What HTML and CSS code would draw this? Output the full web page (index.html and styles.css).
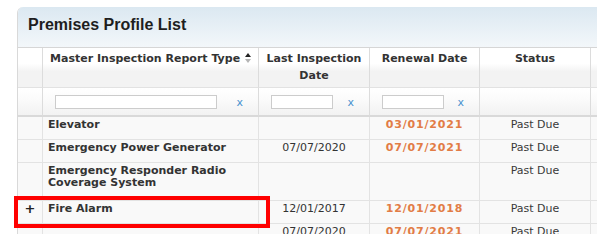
FILE: index.html
```html
<!DOCTYPE html>
<html>
<head>
<meta charset="utf-8">
<link rel="stylesheet" href="styles.css">
</head>
<body>
<div class="page">
  <div class="panel">
    <div class="panel-title">Premises Profile List</div>
    <table class="grid">
      <thead>
        <tr class="head-row">
          <th class="c0"></th>
          <th class="c1">Master Inspection Report Type <svg class="sort" width="6" height="12" viewBox="0 0 6 12"><polygon points="0,5 3,1 6,5" fill="#222"/><polygon points="0,7 6,7 3,11" fill="#b5b5b5"/></svg></th>
          <th class="c2">Last Inspection<br>Date</th>
          <th class="c3">Renewal Date</th>
          <th class="c4">Status</th>
          <th class="c5"></th>
        </tr>
        <tr class="filter-row">
          <td></td>
          <td><div class="filter"><input class="filter-input wide" type="text"><span class="clear">x</span></div></td>
          <td><div class="filter"><input class="filter-input" type="text"><span class="clear">x</span></div></td>
          <td><div class="filter"><input class="filter-input" type="text"><span class="clear">x</span></div></td>
          <td></td>
          <td></td>
        </tr>
      </thead>
      <tbody>
        <tr>
          <td></td>
          <td class="type">Elevator</td>
          <td class="date"></td>
          <td class="renew">03/01/2021</td>
          <td class="status">Past Due</td>
          <td></td>
        </tr>
        <tr>
          <td></td>
          <td class="type">Emergency Power Generator</td>
          <td class="date">07/07/2020</td>
          <td class="renew">07/07/2021</td>
          <td class="status">Past Due</td>
          <td></td>
        </tr>
        <tr class="tall">
          <td></td>
          <td class="type">Emergency Responder Radio Coverage System</td>
          <td class="date"></td>
          <td class="renew"></td>
          <td class="status">Past Due</td>
          <td></td>
        </tr>
        <tr>
          <td class="expand">+</td>
          <td class="type">Fire Alarm</td>
          <td class="date">12/01/2017</td>
          <td class="renew">12/01/2018</td>
          <td class="status">Past Due</td>
          <td></td>
        </tr>
        <tr>
          <td></td>
          <td class="type"></td>
          <td class="date">07/07/2020</td>
          <td class="renew">07/07/2021</td>
          <td class="status">Past Due</td>
          <td></td>
        </tr>
      </tbody>
    </table>
  </div>
  <div class="highlight"></div>
</div>
</body>
</html>
```
FILE: styles.css
```css
html, body {
  margin: 0;
  padding: 0;
  background: #ffffff;
}
body {
  width: 597px;
  height: 234px;
  overflow: hidden;
  font-family: "DejaVu Sans", Verdana, sans-serif;
  font-size: 11px;
  color: #333333;
}
.page {
  position: relative;
  width: 597px;
  height: 234px;
  overflow: hidden;
}
.panel {
  margin: 7px 0 0 17px;
  width: 650px;
  border-left: 1px solid #d9d9d9;
  border-top-left-radius: 6px;
  overflow: hidden;
}
.panel-title {
  height: 40px;
  box-sizing: border-box;
  padding: 8px 0 0 10px;
  font-family: "Liberation Sans", Arial, sans-serif;
  font-weight: bold;
  font-size: 16px;
  line-height: 20px;
  color: #1e1e1e;
  background: linear-gradient(#dbe8f1, #f3f7fa);
}
.grid {
  border-collapse: separate;
  border-spacing: 0;
  table-layout: fixed;
  width: 633px;
  border-top: 1px solid #d6d6d6;
}
.grid th, .grid td {
  box-sizing: border-box;
  border-right: 1px solid #dcdcdc;
  padding: 0;
}
.c0 { width: 25px; }
.c1 { width: 216px; }
.c2 { width: 111px; }
.c3 { width: 110px; }
.c4 { width: 111px; }
.c5 { width: 60px; }

.grid .head-row th {
  padding: 2px 4px 3px;
  line-height: 17px;
  font-weight: bold;
  text-align: center;
  vertical-align: top;
  color: #333333;
  background: linear-gradient(#ffffff 0%, #ffffff 40%, #f3f3f3 60%, #f3f3f3 100%);
  border-bottom: 1px solid #e2e2e2;
}
.sort {
  vertical-align: -2px;
  margin-left: 1px;
}
.grid .filter-row td {
  padding: 7px 15px 6px 12px;
  background: linear-gradient(#ffffff 0%, #fbfbfb 40%, #f2f2f2 100%);
  border-bottom: 2px solid #d9d9d9;
}
.filter {
  display: flex;
  align-items: center;
  justify-content: space-between;
  height: 14px;
}
.filter-input {
  box-sizing: border-box;
  width: 62px;
  height: 14px;
  margin: 0;
  padding: 0;
  border: 1px solid #cccccc;
  background: #ffffff;
}
.filter-input.wide {
  width: 162px;
}
.clear {
  color: #4a92cf;
  font-size: 11px;
  line-height: 14px;
  margin-top: 1px;
}
.grid tbody td {
  padding: 2px 5px 8px;
  line-height: 12px;
  vertical-align: top;
  background: #f9f9f9;
  border-bottom: 1px solid #e3e3e3;
  border-right: 1px solid #e3e3e3;
}
.grid tbody tr.tall td {
  padding-bottom: 11px;
}
.type {
  font-weight: bold;
  color: #333333;
}
.date {
  text-align: center;
  color: #333333;
}
.renew {
  text-align: center;
  font-weight: bold;
  color: #e27c46;
  letter-spacing: 0.8px;
}
.status {
  text-align: center;
  color: #3a3a3a;
}
.grid tbody td.expand {
  font-weight: bold;
  font-size: 13px;
  text-align: center;
  color: #222222;
}
.highlight {
  position: absolute;
  left: 14px;
  top: 196px;
  width: 256px;
  height: 32px;
  box-sizing: border-box;
  border: 4px solid #ff0000;
}
```
